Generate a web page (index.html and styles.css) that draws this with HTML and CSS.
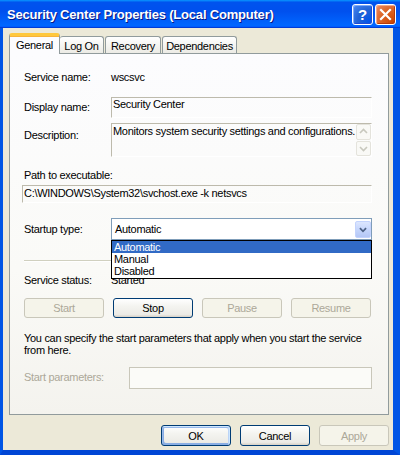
FILE: index.html
```html
<!DOCTYPE html>
<html>
<head>
<meta charset="utf-8">
<title>Security Center Properties</title>
<link rel="stylesheet" href="styles.css">
</head>
<body>
<div class="window">
  <div class="titlebar">
    <span class="title">Security Center Properties (Local Computer)</span>
    <div class="tb-buttons">
      <span class="tb-btn tb-help">?</span>
      <span class="tb-btn tb-close">
        <svg width="19" height="19" viewBox="0 0 19 19"><path d="M5 5 L14 14 M14 5 L5 14" stroke="#fff" stroke-width="2.2" stroke-linecap="square"/></svg>
      </span>
    </div>
  </div>
  <div class="frame">
    <div class="tabs">
      <div class="tab tab-general active">General</div>
      <div class="tab tab-logon">Log On</div>
      <div class="tab tab-recovery">Recovery</div>
      <div class="tab tab-deps">Dependencies</div>
    </div>
    <div class="panel">
      <div class="field row-service">
        <span class="label">Service name:</span>
        <span class="value">wscsvc</span>
      </div>
      <div class="field row-display">
        <span class="label label-low">Display name:</span>
        <div class="ro box-display">Security Center</div>
      </div>
      <div class="field row-desc">
        <span class="label label-low2">Description:</span>
        <div class="ro box-desc">
          <span class="desc-text">Monitors system security settings and configurations.</span>
          <div class="vscroll">
            <span class="sarrow"><svg width="13" height="13" viewBox="0 0 13 13"><path d="M3 8 L6.5 4.5 L10 8" fill="none" stroke="#C8C8BE" stroke-width="1.6"/></svg></span>
            <span class="sarrow"><svg width="13" height="13" viewBox="0 0 13 13"><path d="M3 5 L6.5 8.5 L10 5" fill="none" stroke="#C8C8BE" stroke-width="1.6"/></svg></span>
          </div>
        </div>
      </div>
      <div class="row-path-label">Path to executable:</div>
      <div class="ro box-path">C:\WINDOWS\System32\svchost.exe -k netsvcs</div>
      <div class="field row-startup">
        <span class="label label-mid">Startup type:</span>
        <div class="combo">
          <span class="combo-text">Automatic</span>
          <span class="combo-btn"><svg width="16" height="17" viewBox="0 0 16 17"><path d="M4.5 7 L8 10.5 L11.5 7" fill="none" stroke="#4D6185" stroke-width="2"/></svg></span>
          <ul class="droplist">
            <li class="selected">Automatic</li>
            <li>Manual</li>
            <li>Disabled</li>
          </ul>
        </div>
      </div>
      <div class="separator"></div>
      <div class="field row-status">
        <span class="label">Service status:</span>
        <span class="value">Started</span>
      </div>
      <div class="svc-buttons">
        <button class="btn disabled">Start</button>
        <button class="btn">Stop</button>
        <button class="btn disabled">Pause</button>
        <button class="btn disabled">Resume</button>
      </div>
      <p class="hint">You can specify the start parameters that apply when you start the service from here.</p>
      <div class="row-params">
        <span class="label label-disabled">Start parameters:</span>
        <div class="params-input"></div>
      </div>
    </div>
    <div class="dlg-buttons">
      <button class="btn dlg default">OK</button>
      <button class="btn dlg">Cancel</button>
      <button class="btn dlg disabled">Apply</button>
    </div>
  </div>
</div>
</body>
</html>
```

FILE: styles.css
```css
* { box-sizing: border-box; }

html, body {
  margin: 0;
  padding: 0;
}

body {
  width: 400px;
  height: 455px;
  overflow: hidden;
  background: #0055EA;
  font-family: "Liberation Sans", Arial, sans-serif;
  font-size: 11px;
  letter-spacing: -0.3px;
  color: #000;
}

.window {
  width: 400px;
  height: 455px;
  display: flex;
  flex-direction: column;
}

/* ---------- title bar ---------- */
.titlebar {
  height: 28px;
  flex: none;
  display: flex;
  align-items: center;
  justify-content: space-between;
  padding: 1px 4px 0 7px;
  background: linear-gradient(180deg, #0997ff 0%, #0053ee 8%, #0050ee 40%, #0066ff 88%, #0066ff 93%, #005bff 95%, #003dd7 96%, #003dd7 100%);
}

.title {
  color: #fff;
  font-weight: bold;
  font-size: 13px;
  letter-spacing: -0.2px;
  text-shadow: 1px 1px #0A1883;
}

.tb-buttons {
  display: flex;
  gap: 2px;
}

.tb-btn {
  width: 21px;
  height: 21px;
  border: 1px solid #fff;
  border-radius: 3px;
  display: flex;
  align-items: center;
  justify-content: center;
}

.tb-help {
  background: radial-gradient(circle at 85% 85%, #0054E9 0%, #2263D5 50%, #4C8BF5 100%);
  box-shadow: inset -1px -1px #1C4AD6, inset 1px 1px #7FAAF8;
  color: #fff;
  font-weight: bold;
  font-size: 15px;
  letter-spacing: 0;
}

.tb-close {
  background: radial-gradient(circle at 90% 90%, #CC4600 0%, #DC6527 55%, #F08E6A 100%);
  box-shadow: inset -1px -1px #B53A0A, inset 1px 1px #F4A98A;
}

/* ---------- frame ---------- */
.frame {
  flex: 1;
  display: flex;
  flex-direction: column;
  background: #ECE9D8;
  border-left: 3px solid #0055E5;
  border-right: 7px solid #0055E5;
  border-bottom: 5px solid #0046D5;
  padding: 5px 4px 0 6px;
}

/* ---------- tabs ---------- */
.tabs {
  height: 20px;
  flex: none;
  display: flex;
  align-items: flex-end;
  position: relative;
  z-index: 2;
}

.tab {
  height: 17px;
  border: 1px solid #919B9C;
  border-bottom: none;
  border-radius: 3px 3px 0 0;
  background: linear-gradient(180deg, #FFFFFF 0%, #F3F3EF 60%, #ECEBE5 100%);
  display: flex;
  align-items: center;
  justify-content: center;
  padding-top: 1px;
}

.tab.active {
  height: 21px;
  margin-bottom: -1px;
  background: #FCFCFE;
  border-top: 3px solid #FFC83C;
  box-shadow: inset 0 1px #F7B33A;
  padding-top: 0;
  padding-bottom: 1px;
}

.tab-general { width: 51px; }
.tab-logon { width: 44px; border-left: none; }
.tab-recovery { width: 56px; margin-left: 1px; }
.tab-deps { width: 75px; margin-left: 1px; }

/* ---------- panel ---------- */
.panel {
  height: 362px;
  flex: none;
  border: 1px solid #919B9C;
  background: linear-gradient(180deg, #FCFCFE 0%, #FAFAF7 60%, #F4F3EE 100%);
  padding: 0 16px 0 14px;
  position: relative;
  z-index: 1;
}

.field {
  display: grid;
  grid-template-columns: 87px 1fr;
  line-height: 13px;
}

.label { white-space: nowrap; }
.label-low { padding-top: 4px; }
.label-low2 { padding-top: 6px; }
.label-mid { padding-top: 5px; }
.label-disabled { color: #ACA899; padding-top: 4px; }

.row-service { margin-top: 17px; }

.ro {
  border-top: 1px solid #BDBAAC;
  border-left: 1px solid #BDBAAC;
  border-right: 1px solid #FFFFFF;
  border-bottom: 1px solid #FFFFFF;
}

.row-display { margin-top: 13px; height: 21px; }
.box-display {
  height: 21px;
  padding: 0 0 0 1px;
  line-height: 12px;
}

.row-desc { margin-top: 5px; height: 34px; }
.box-desc {
  height: 34px;
  display: flex;
  padding-left: 1px;
}
.desc-text {
  flex: 1;
  padding-top: 1px;
  line-height: 13px;
  white-space: nowrap;
}
.vscroll {
  width: 15px;
  display: flex;
  flex-direction: column;
  gap: 1px;
}
.sarrow {
  height: 16px;
  border: 1px solid #E4E3DC;
  border-radius: 2px;
  background: #F9F9F6;
  display: flex;
  align-items: center;
  justify-content: center;
}

.row-path-label {
  margin-top: 12px;
  line-height: 13px;
}

.box-path {
  margin: 3px 0 0 -2px;
  height: 18px;
  padding: 1px 0 0 1px;
  line-height: 13px;
  white-space: nowrap;
}

.row-startup { margin-top: 15px; height: 22px; }

.combo {
  position: relative;
  height: 22px;
  border: 1px solid #7F9DB9;
  background: #fff;
  display: flex;
  align-items: center;
  justify-content: space-between;
  padding: 0 0 0 3px;
}

.combo-btn {
  width: 16px;
  height: 17px;
  margin-right: 0;
  border: 1px solid #C3D3FD;
  border-radius: 2px;
  background: linear-gradient(180deg, #DCE6FE 0%, #C6D6FC 50%, #B4C7F6 100%);
  display: flex;
  align-items: center;
  justify-content: center;
}

.droplist {
  position: absolute;
  top: 21px;
  left: -1px;
  right: -1px;
  height: 39px;
  margin: 0;
  padding: 0;
  list-style: none;
  background: #fff;
  border: 1px solid #000;
  z-index: 5;
}

.droplist li {
  height: 12px;
  line-height: 12px;
  padding-left: 2px;
}

.droplist li.selected {
  background: #316AC5;
  color: #fff;
}

.separator {
  margin-top: 20px;
  height: 2px;
  border-top: 1px solid #D0D0BF;
  border-bottom: 1px solid #FFFFFF;
}

.row-status { margin-top: 12px; }

.svc-buttons {
  margin-top: 11px;
  height: 20px;
  display: grid;
  grid-template-columns: repeat(4, 80px);
  gap: 9px;
}

.btn {
  height: 100%;
  margin: 0;
  padding: 0;
  font: inherit;
  letter-spacing: inherit;
  color: #000;
  border: 1px solid #003C74;
  border-radius: 3px;
  background: linear-gradient(180deg, #FFFFFF 0%, #F4F4F0 40%, #ECEBE6 86%, #D6D0C5 100%);
  display: flex;
  align-items: center;
  justify-content: center;
}

.btn.disabled {
  border-color: #C9C7BA;
  background: #F5F4EA;
  color: #ACA899;
}

.btn.default {
  box-shadow: inset -1px 1px #CEE7FF, inset 1px 2px #98B8EA, inset -2px 2px #BCD4F6, inset 1px -1px #89ADE4, inset 2px -2px #89ADE4;
}

.hint {
  margin: 14px 0 0 0;
  line-height: 12px;
}

.row-params {
  margin-top: 11px;
  height: 22px;
  display: grid;
  grid-template-columns: 105px 1fr;
  line-height: 13px;
}

.params-input {
  height: 22px;
  border: 1px solid #C9C7BA;
  background: #FBFBF8;
}

/* ---------- dialog buttons ---------- */
.dlg-buttons {
  margin-top: 10px;
  height: 21px;
  flex: none;
  display: flex;
  justify-content: flex-end;
  gap: 9px;
}

.btn.dlg { width: 70px; }
```
